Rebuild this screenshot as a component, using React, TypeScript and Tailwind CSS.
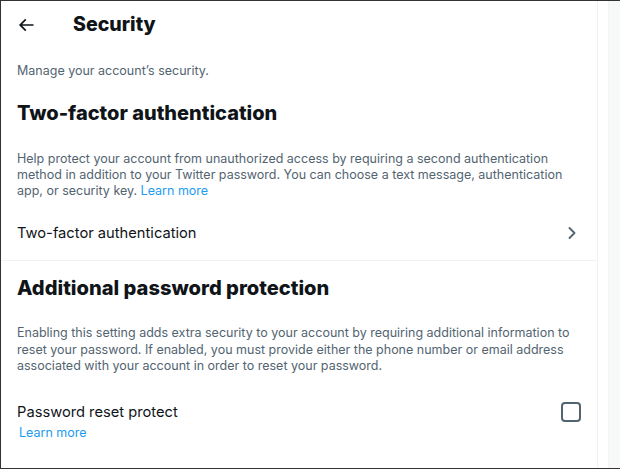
const BackArrow = () => (
  <svg viewBox="0 0 24 24" className="size-5 fill-[#0f1419]">
    <path d="M7.414 13l5.043 5.04-1.414 1.42L3.586 12l7.457-7.46 1.414 1.42L7.414 11H21v2H7.414z" />
  </svg>
);

const Chevron = () => (
  <svg viewBox="0 0 8 12" className="h-3 w-2">
    <polyline points="1.5,1 6.5,6 1.5,11" fill="none" stroke="#536471" strokeWidth="1.8" strokeLinejoin="round" strokeLinecap="round" />
  </svg>
);

export default function App() {
  return (
    <div className="flex h-[469px] w-[620px] overflow-hidden border-y border-l border-[#333] bg-white font-['Inter',sans-serif] text-[#0f1419]">
      <div className="flex w-[597px] shrink-0 flex-col border-r border-[#eff3f4]">
        <div className="flex h-[46px] items-center pl-[15px]">
          <div className="w-[57px] pt-[2px]">
            <BackArrow />
          </div>
          <h1 className="text-[19.6px] leading-6 font-extrabold">Security</h1>
        </div>

        <p className="px-4 pt-[16px] text-[12.5px] leading-4 text-[#536471]">Manage your account’s security.</p>

        <h2 className="mt-[22px] px-4 text-[20px] leading-6 font-extrabold">Two-factor authentication</h2>
        <div className="mt-[26px] px-4 text-[12.5px] leading-4 text-[#536471]">
          <p>
            Help protect your account from unauthorized access by requiring a second authentication method in addition
            to your Twitter password. You can choose a text message, authentication app, or security key.{" "}
            <a className="text-[#1d9bf0]">Learn more</a>
          </p>
        </div>

        <div className="flex items-center justify-between border-b border-[#eff3f4] pt-[24px] pb-[17px] pl-4 pr-[21px]">
          <span className="text-[14.7px] leading-5">Two-factor authentication</span>
          <Chevron />
        </div>

        <h2 className="mt-[15px] px-4 text-[20.1px] leading-6 font-extrabold">Additional password protection</h2>
        <p className="mt-[25px] px-4 text-[12.5px] leading-[16.5px] text-[#536471]">
          Enabling this setting adds extra security to your account by requiring additional information to reset your
          password. If enabled, you must provide either the phone number or email address associated with your account
          in order to reset your password.
        </p>

        <div className="mt-[27px] flex items-start justify-between pl-4 pr-4">
          <div className="flex flex-col">
            <span className="text-[14.7px] leading-5">Password reset protect</span>
            <span className="mt-[3px] pl-[2px] text-[12.5px] leading-4 text-[#1d9bf0]">Learn more</span>
          </div>
          <div className="size-5 rounded-[4px] border-2 border-[#536471]" />
        </div>
      </div>
      <div className="w-[10px] shrink-0 bg-white" />
      <div className="flex-1 border-l border-[#f2f4f5] bg-[#f7f9f9]" />
    </div>
  );
}
